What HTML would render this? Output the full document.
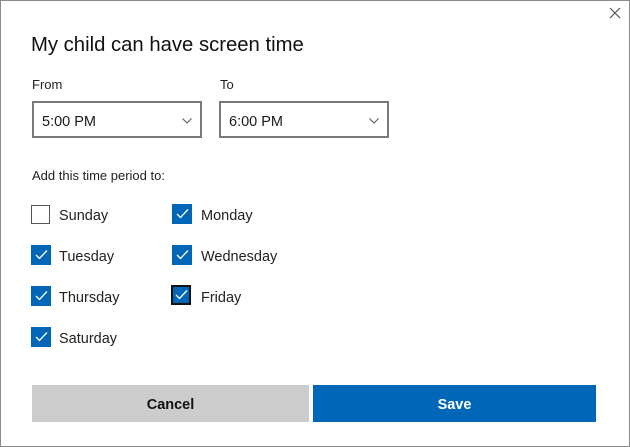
<!DOCTYPE html>
<html><head><style>
body{margin:0;width:630px;height:447px;overflow:hidden;background:#fff;font-family:"Liberation Sans",sans-serif;color:#1a1a1a}
.frame{position:absolute;left:0;top:0;width:628px;height:445px;border:1px solid #8a8a8a}
.a{position:absolute}
.title{left:31px;top:34px;font-size:20.3px;color:#111}
.lbl{font-size:13px;color:#222}
.dd{border:2px solid #7a7a7a;width:166px;height:33px;box-sizing:content-box;font-size:14.5px}
.dd span{position:absolute;left:8px;top:11px}
.dd svg{position:absolute;right:8px;top:15px}
.cb{width:18px;height:18px;background:#0067b8;border:1px solid #0067b8}
.cb.off{background:#fff;border:1px solid #555;width:17px;height:17px}
.cb.foc{border:2px solid #111;width:16px;height:16px}
.cb svg{position:absolute;left:3px;top:3px}
.cb.foc svg{left:2px;top:2px}
.t{font-size:14.5px;color:#222}
.btn{top:385px;height:37px;font-size:14.5px;font-weight:bold;text-align:center;line-height:40px}
</style></head><body>
<div class="frame"></div>
<svg class="a" style="left:609px;top:7px" width="12" height="12"><path d="M1 1L11 11M11 1L1 11" stroke="#555" stroke-width="1.2"/></svg>
<div class="a title">My child can have screen time</div>
<div class="a lbl" style="left:32px;top:77px">From</div>
<div class="a lbl" style="left:220px;top:77px">To</div>
<div class="a dd" style="left:32px;top:101px"><span>5:00 PM</span><svg width="10" height="6"><path d="M0.5 0.5L5 5L9.5 0.5" fill="none" stroke="#555"/></svg></div>
<div class="a dd" style="left:219px;top:101px"><span>6:00 PM</span><svg width="10" height="6"><path d="M0.5 0.5L5 5L9.5 0.5" fill="none" stroke="#555"/></svg></div>
<div class="a lbl" style="left:32px;top:168px">Add this time period to:</div>

<div class="a cb off" style="left:31px;top:205px"></div><div class="a t" style="left:59px;top:208px">Sunday</div>
<div class="a cb" style="left:172px;top:204px"><svg width="13" height="11"><path d="M1 6L4.5 9.5L12 1.5" fill="none" stroke="#fff" stroke-width="1.3"/></svg></div><div class="a t" style="left:201px;top:208px">Monday</div>
<div class="a cb" style="left:31px;top:245px"><svg width="13" height="11"><path d="M1 6L4.5 9.5L12 1.5" fill="none" stroke="#fff" stroke-width="1.3"/></svg></div><div class="a t" style="left:59px;top:249px">Tuesday</div>
<div class="a cb" style="left:172px;top:245px"><svg width="13" height="11"><path d="M1 6L4.5 9.5L12 1.5" fill="none" stroke="#fff" stroke-width="1.3"/></svg></div><div class="a t" style="left:201px;top:249px">Wednesday</div>
<div class="a cb" style="left:31px;top:286px"><svg width="13" height="11"><path d="M1 6L4.5 9.5L12 1.5" fill="none" stroke="#fff" stroke-width="1.3"/></svg></div><div class="a t" style="left:59px;top:290px">Thursday</div>
<div class="a cb foc" style="left:171px;top:285px"><svg width="13" height="11"><path d="M1 6L4.5 9.5L12 1.5" fill="none" stroke="#fff" stroke-width="1.3"/></svg></div><div class="a t" style="left:201px;top:290px">Friday</div>
<div class="a cb" style="left:31px;top:327px"><svg width="13" height="11"><path d="M1 6L4.5 9.5L12 1.5" fill="none" stroke="#fff" stroke-width="1.3"/></svg></div><div class="a t" style="left:59px;top:331px">Saturday</div>

<div class="a btn" style="left:32px;width:277px;background:#cccccc;color:#111">Cancel</div>
<div class="a btn" style="left:313px;width:283px;background:#0067b8;color:#fff">Save</div>
</body></html>
